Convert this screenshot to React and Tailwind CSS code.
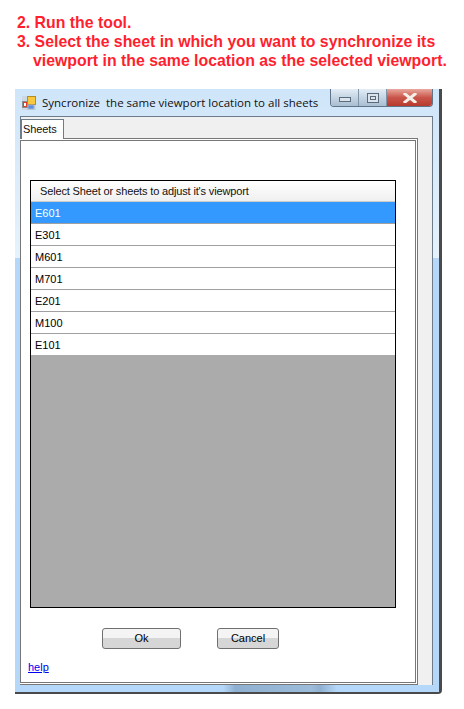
const rows = ["E601", "E301", "M601", "M701", "E201", "M100", "E101"];

function AppIcon() {
  return (
    <svg width="14" height="14" viewBox="0 0 14 14" className="shrink-0">
      <rect x="0" y="0" width="14" height="14" fill="#c9ced6" opacity="0.6" />
      <rect x="5.5" y="0.5" width="8" height="8" fill="#f8c93e" stroke="#b98a1e" />
      <rect x="0.5" y="5.5" width="5" height="6" fill="#d8402c" stroke="#8d8d8d" />
      <rect x="6" y="9" width="6" height="4" fill="#5d8fdc" stroke="#9db4d4" />
      <rect x="2" y="7" width="2" height="3" fill="#ffffff" />
    </svg>
  );
}

export default function App() {
  return (
    <div className="w-[464px] h-[709px] bg-white overflow-hidden font-['Liberation_Sans',Arial,sans-serif]">
      <div className="pt-[13px] pl-[17px] text-[15.85px] leading-[19px] font-bold text-[#ff1f2f] h-[89px]">
        <div>2. Run the tool.</div>
        <div>3. Select the sheet in which you want to synchronize its</div>
        <div className="pl-[16px]">viewport in the same location as the selected viewport.</div>
      </div>

      <div className="ml-[15px] w-[427px] h-[605px] flex flex-col bg-gradient-to-b from-[#cfe5f9] via-[#e6f2fd] via-28% to-[#b5d8fa] to-28% pl-[5px] pr-[6px] border-r-[3px] border-b-2 border-[#4a4a4a] rounded-br-[4px]">
        <div className="h-[27px] shrink-0 flex items-start justify-between">
          <div className="flex items-center gap-[6px] pt-[6px] pl-[2px]">
            <AppIcon />
            <span className="text-[11.5px] leading-[16px] whitespace-pre text-[#111] font-['Open_Sans',sans-serif]">Syncronize  the same viewport location to all sheets</span>
          </div>
          <div className="flex h-[18px] w-[103px] rounded-b-[4px] overflow-hidden border border-t-0 border-[#5f7488]">
            <div className="w-[28px] flex items-center justify-center border-r border-[#7f93a6] bg-gradient-to-b from-[#e3edf6] to-[#a9bed2]">
              <div className="w-[12px] h-[5px] mt-[3px] bg-[#dbe4ec] border border-[#5a6b7c]" />
            </div>
            <div className="w-[28px] flex items-center justify-center border-r border-[#7f93a6] bg-gradient-to-b from-[#e3edf6] to-[#a9bed2]">
              <div className="w-[12px] h-[10px] border border-[#5a6b7c] bg-[#dbe4ec] flex items-center justify-center">
                <div className="w-[6px] h-[4px] border border-[#5a6b7c]" />
              </div>
            </div>
            <div className="flex-1 flex items-center justify-center bg-gradient-to-b from-[#e9a79f] via-[#c9554a] to-[#b8392e]">
              <svg width="14" height="10" viewBox="0 0 14 10">
                <path d="M2 1 L12 9 M12 1 L2 9" stroke="#f4efe9" strokeWidth="3" strokeLinecap="square" />
              </svg>
            </div>
          </div>
        </div>

        <div className="flex-1 min-h-0 bg-[#f0f0f0] border border-b-0 border-[#6d7c8b] flex flex-col">
          <div className="h-[21px] shrink-0 flex items-end pt-[1px]">
            <div className="w-[43px] h-[20px] bg-white border border-b-0 border-[#6d7c8b] text-[11px] tracking-[-0.1px] leading-[19px] pl-[1px] text-[#111] -mb-px z-10">Sheets</div>
          </div>
          <div className="h-[547px] shrink-0 w-[398px] border-[3px] border-double border-[#777] bg-white border-l-[1px] flex flex-col -ml-px pt-[39px] pl-[9px]">
            <div className="w-[366px] h-[428px] shrink-0 border border-black bg-[#ababab] flex flex-col">
              <div className="h-[21px] shrink-0 bg-gradient-to-b from-white to-[#f0f0f0] border-b border-[#ccc] text-[11px] tracking-[-0.15px] leading-[20px] pl-[9px] text-[#111]">
                Select Sheet or sheets to adjust it's viewport
              </div>
              {rows.map((r, i) => (
                <div
                  key={r}
                  className={
                    i === 0
                      ? "h-[21px] shrink-0 bg-[#3399ff] text-white text-[11px] leading-[22px] pl-[4px]"
                      : "h-[22px] shrink-0 bg-white border-t border-[#a0a0a0] text-black text-[11px] leading-[22px] pl-[4px]"
                  }
                >
                  {r}
                </div>
              ))}
            </div>
            <div className="flex mt-[20px] pl-[72px] gap-[36px]">
              <button className="w-[79px] h-[21px] rounded-[3px] border border-[#707070] bg-gradient-to-b from-[#f4f4f4] from-45% to-[#d6d6d6] to-45% text-[11px] text-black">Ok</button>
              <button className="w-[62px] h-[21px] rounded-[3px] border border-[#707070] bg-gradient-to-b from-[#f4f4f4] from-45% to-[#d6d6d6] to-45% text-[11px] text-black">Cancel</button>
            </div>
            <a href="#" className="mt-[11px] -ml-[2px] text-[11px] leading-[14px] text-[#0000ee] underline w-fit">help</a>
          </div>
        </div>
        <div className="h-[7px] shrink-0 -ml-[5px] -mr-[6px] bg-[linear-gradient(to_right,#b5d8fa_49%,#8fb0d0_52%,#9cbcda_70%,#8fb0d0_72%,#b5d8fa_76%)]" />
      </div>
    </div>
  );
}
